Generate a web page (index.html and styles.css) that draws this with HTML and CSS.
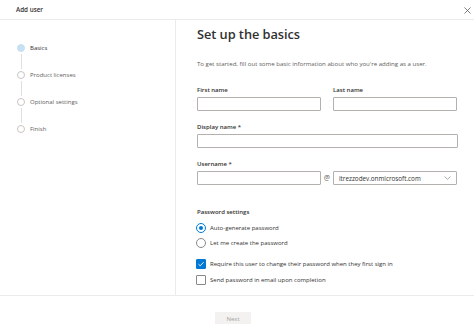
FILE: index.html
```html
<!DOCTYPE html>
<html lang="en">
<head>
    <meta charset="UTF-8">
    <meta name="viewport" content="width=device-width, initial-scale=1.0">
    <title>Add user</title>
    <link rel="stylesheet" href="styles.css">
</head>
<body>

    <div class="header">
        <span class="header-title">Add user</span>
        <svg class="close" width="7" height="7" viewBox="0 0 7 7"><path d="M0.5 0.5L6.5 6.5M6.5 0.5L0.5 6.5" stroke="#605e5c" stroke-width="0.8"/></svg>
    </div>

    <div class="main">
        <div class="nav">
            <div class="step active"><span class="dot"></span>Basics</div>
            <div class="step"><span class="dot"></span>Product licenses</div>
            <div class="step"><span class="dot"></span>Optional settings</div>
            <div class="step last"><span class="dot"></span>Finish</div>
        </div>

        <div class="content">
            <h1>Set up the basics</h1>
            <p class="intro">To get started, fill out some basic information about who you're adding as a user.</p>

            <div class="row two">
                <div class="field">
                    <label>First name</label>
                    <div class="input"></div>
                </div>
                <div class="field">
                    <label>Last name</label>
                    <div class="input"></div>
                </div>
            </div>

            <div class="row">
                <div class="field">
                    <label>Display name *</label>
                    <div class="input"></div>
                </div>
            </div>

            <div class="row">
                <label>Username *</label>
                <div class="user-line">
                    <div class="input"></div>
                    <span class="at">@</span>
                    <div class="input select">
                        <span>itrezzodev.onmicrosoft.com</span>
                        <svg width="7" height="4" viewBox="0 0 7 4"><path d="M0.5 0.5L3.5 3.3L6.5 0.5" fill="none" stroke="#8a8886" stroke-width="0.7"/></svg>
                    </div>
                </div>
            </div>

            <div class="password">
                <div class="section-label">Password settings</div>
                <div class="option radio-row"><span class="radio checked"></span>Auto-generate password</div>
                <div class="option radio-row"><span class="radio"></span>Let me create the password</div>
                <div class="checks">
                    <div class="option check-row"><span class="box checked"><svg width="8" height="8" viewBox="0 0 8 8"><path d="M1.5 4.2L3.2 5.8L6.6 2.2" fill="none" stroke="#fff" stroke-width="0.9"/></svg></span>Require this user to change their password when they first sign in</div>
                    <div class="option check-row"><span class="box"></span>Send password in email upon completion</div>
                </div>
            </div>
        </div>
    </div>

    <div class="footer">
        <button class="next" disabled>Next</button>
    </div>

</body>
</html>
```

FILE: styles.css
```css
body {
    font-family: 'Open Sans', 'Noto Sans', sans-serif;
    background-color: #fff;
    color: #323130;
    margin: 0;
    padding: 0;
    width: 474px;
    height: 324px;
    overflow: hidden;
}
.header {
    height: 19px;
    border-bottom: 1px solid #edebe9;
    display: flex;
    align-items: center;
    justify-content: space-between;
    padding: 0 3px 0 16px;
}
.header-title {
    font-size: 6.3px;
    font-weight: 600;
}
.close {
    margin-top: 1px;
}
.main {
    display: flex;
    height: 275px;
}
.nav {
    width: 176px;
    border-right: 1px solid #edebe9;
    padding-top: 24px;
    box-sizing: border-box;
}
.step {
    position: relative;
    height: 27px;
    display: flex;
    align-items: flex-start;
    padding-left: 17px;
    font-size: 6px;
    line-height: 8px;
    color: #605e5c;
}
.step.active {
    color: #323130;
}
.dot {
    width: 6px;
    height: 6px;
    border: 1px solid #c8c6c4;
    border-radius: 50%;
    background: #fff;
    margin-right: 5px;
    flex-shrink: 0;
}
.active .dot {
    background: #c7e0f4;
    border-color: #c7e0f4;
}
.step::after {
    content: '';
    position: absolute;
    left: 20.5px;
    top: 10px;
    height: 15px;
    width: 1px;
    background: #e1dfdd;
}
.step.last::after {
    display: none;
}
.content {
    padding-left: 21px;
    width: 261px;
}
h1 {
    font-size: 12.8px;
    font-weight: 600;
    line-height: 18px;
    margin: 5px 0 0;
    letter-spacing: -0.05px;
}
.intro {
    font-size: 6.1px;
    line-height: 10px;
    color: #605e5c;
    margin: 16px 0 0;
}
.row {
    margin-top: 16px;
}
.row + .row {
    margin-top: 11px;
}
.row.two {
    display: grid;
    grid-template-columns: 124px 124px;
    column-gap: 12px;
}
label, .section-label {
    display: block;
    font-size: 6px;
    line-height: 10px;
    font-weight: 600;
    margin-bottom: 2px;
}
.input {
    height: 14px;
    border: 1px solid #b3b0ad;
    border-radius: 1px;
    box-sizing: border-box;
}
.user-line {
    display: grid;
    grid-template-columns: 124px 12px 124px;
}
.at {
    font-size: 7px;
    line-height: 14px;
    text-align: center;
    color: #605e5c;
}
.select {
    display: flex;
    align-items: center;
    justify-content: space-between;
    padding: 0 5px 0 5px;
    font-size: 6.3px;
    color: #323130;
}
.password {
    margin-top: 22px;
}
.section-label {
    margin-bottom: 3px;
}
.option {
    display: flex;
    align-items: center;
    font-size: 6px;
    color: #323130;
}
.radio-row {
    height: 15px;
}
.check-row {
    height: 16px;
}
.checks {
    margin-top: 6px;
}
.radio {
    width: 8px;
    height: 8px;
    border: 1px solid #8a8886;
    border-radius: 50%;
    margin: 0 4px 0 -1px;
    box-sizing: content-box;
    display: flex;
    align-items: center;
    justify-content: center;
}
.radio.checked {
    border-color: #0078d4;
}
.radio.checked::after {
    content: '';
    width: 4px;
    height: 4px;
    border-radius: 50%;
    background: #0078d4;
}
.box {
    width: 8px;
    height: 8px;
    border: 1px solid #8a8886;
    border-radius: 1px;
    margin: 0 4px 0 -1px;
    display: flex;
    align-items: center;
    justify-content: center;
}
.box.checked {
    background: #0078d4;
    border-color: #0078d4;
}
.footer {
    border-top: 1px solid #edebe9;
    padding: 8px 0 0 215px;
}
.next {
    width: 36px;
    height: 14px;
    background-color: #f3f2f1;
    color: #a19f9d;
    border: none;
    border-radius: 1px;
    font-family: inherit;
    font-size: 6px;
    padding: 0;
}
```
